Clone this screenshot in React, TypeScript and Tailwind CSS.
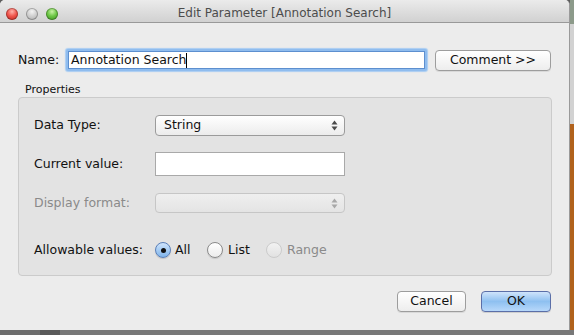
import React from "react";

const font = { fontFamily: '"DejaVu Sans", "Liberation Sans", sans-serif' };

function Light({ c1, c2, c3 }: { c1: string; c2: string; c3: string }) {
  return (
    <div
      className="w-[12px] h-[12px] rounded-full"
      style={{
        background: `radial-gradient(circle at 50% 30%, ${c1} 0%, ${c2} 45%, ${c3} 100%)`,
        boxShadow: "inset 0 0 0 1px rgba(0,0,0,0.25)",
      }}
    />
  );
}

function Stepper({ disabled }: { disabled?: boolean }) {
  const c = disabled ? "#a8a8a8" : "#4a4a4a";
  return (
    <svg width="7" height="11" viewBox="0 0 7 11">
      <path d="M3.5 0.5 L6.5 4.5 L0.5 4.5 Z" fill={c} />
      <path d="M3.5 10.5 L6.5 6.5 L0.5 6.5 Z" fill={c} />
    </svg>
  );
}

function Radio({ checked, disabled }: { checked?: boolean; disabled?: boolean }) {
  if (checked) {
    return (
      <div className="w-[16px] h-[16px] rounded-full border border-[#5a7fb8] bg-gradient-to-b from-[#cfe4fb] to-[#7fb4ea] flex items-center justify-center shadow-[0_1px_1px_rgba(0,0,0,0.15)]">
        <div className="w-[5px] h-[5px] rounded-full bg-[#111]" />
      </div>
    );
  }
  return (
    <div
      className={
        disabled
          ? "w-[16px] h-[16px] rounded-full border border-[#cbcbcb] bg-gradient-to-b from-[#f2f2f2] to-[#e2e2e2]"
          : "w-[16px] h-[16px] rounded-full border border-[#8a8a8a] bg-gradient-to-b from-[#ffffff] to-[#ececec] shadow-[0_1px_1px_rgba(0,0,0,0.12)]"
      }
    />
  );
}

export default function App() {
  return (
    <div className="w-[574px] h-[335px] bg-[#5d5d5d] flex flex-col overflow-hidden text-[12.5px]" style={font}>
      <div className="flex h-[330px]">
        <div className="w-[570px] h-[330px] bg-[#ececec] rounded-t-[5px] flex flex-col overflow-hidden border-r border-[#9a9a9a]">
          {/* Title bar */}
          <div className="h-[23px] shrink-0 bg-gradient-to-b from-[#ebebeb] to-[#d1d1d1] border-b border-[#999] flex items-start relative">
            <div className="flex gap-[8px] pl-[6px] pt-[8px] relative z-10">
              <Light c1="#ffb3ab" c2="#f0554c" c3="#b8231c" />
              <Light c1="#f4f4f4" c2="#d0d0d0" c3="#a9a9a9" />
              <Light c1="#c9f2a6" c2="#6cc745" c3="#3a8b20" />
            </div>
            <div className="absolute inset-0 flex items-center justify-center text-[12px] text-[#4c4c4c] pt-[3px]">
              Edit Parameter [Annotation Search]
            </div>
          </div>

          {/* Name row */}
          <div className="flex items-center mt-[26px] pl-[18px] h-[22px] shrink-0">
            <span className="text-[#111] w-[48px]">Name:</span>
            <div className="w-[361px] h-[22px] rounded-[2px] p-[2px] bg-[#8fbcee] shadow-[0_0_1px_1px_#a9cdf3]">
              <div className="w-full h-full bg-white border border-[#5d8fcf] flex items-center pl-[2px] text-[#111]">
                Annotation Search<span className="w-px h-[15px] bg-black" />
              </div>
            </div>
            <div className="ml-[8px] w-[116px] h-[21px] rounded-[4px] border border-[#9d9d9d] bg-gradient-to-b from-[#ffffff] to-[#ededed] flex items-center justify-center text-[#111] shadow-[0_1px_0_rgba(0,0,0,0.08)]">
              Comment &gt;&gt;
            </div>
          </div>

          {/* Properties */}
          <div className="pl-[25px] pt-[12px] text-[11px] text-[#111] leading-[13px]">Properties</div>
          <div className="mx-[18px] mt-[1px] h-[179px] w-[534px] shrink-0 rounded-[4px] border border-[#cbcbcb] bg-[#e3e3e3] flex flex-col pl-[15px]">
            <div className="flex items-center mt-[17px] h-[21px]">
              <span className="w-[121px] text-[#111]">Data Type:</span>
              <div className="w-[190px] h-[21px] rounded-[4px] border border-[#9b9b9b] bg-gradient-to-b from-[#ffffff] to-[#ececec] flex items-center justify-between pl-[8px] pr-[6px] text-[#111]">
                String
                <Stepper />
              </div>
            </div>
            <div className="flex items-center mt-[16px] h-[24px]">
              <span className="w-[121px] text-[#111]">Current value:</span>
              <div className="w-[190px] h-[24px] border border-[#a9a9a9] bg-white" />
            </div>
            <div className="flex items-center mt-[17px] h-[20px]">
              <span className="w-[121px] text-[#8a8a8a]">Display format:</span>
              <div className="w-[190px] h-[20px] rounded-[4px] border border-[#c6c6c6] bg-gradient-to-b from-[#efefef] to-[#e4e4e4] flex items-center justify-end pr-[6px]">
                <Stepper disabled />
              </div>
            </div>
            <div className="flex items-center mt-[28px] h-[18px]">
              <span className="w-[121px] text-[#111]">Allowable values:</span>
              <Radio checked />
              <span className="ml-[4px] w-[32px] text-[#111]">All</span>
              <Radio />
              <span className="ml-[5px] w-[38px] text-[#111]">List</span>
              <Radio disabled />
              <span className="ml-[5px] text-[#8a8a8a]">Range</span>
            </div>
          </div>

          {/* Buttons */}
          <div className="flex justify-end pr-[18px] mt-[15px] gap-[15px]">
            <div className="w-[69px] h-[21px] rounded-[4px] border border-[#9d9d9d] bg-gradient-to-b from-[#ffffff] to-[#ededed] flex items-center justify-center text-[#111] shadow-[0_1px_0_rgba(0,0,0,0.08)]">
              Cancel
            </div>
            <div className="w-[70px] h-[21px] rounded-[4px] border border-[#5b6fa8] bg-gradient-to-b from-[#cfe4fb] via-[#8ec0f0] to-[#b7d8fa] flex items-center justify-center text-[#111] shadow-[0_1px_0_rgba(0,0,0,0.12)]">
              OK
            </div>
          </div>
        </div>
        <div className="flex-1 flex flex-col">
          <div className="h-[24px] bg-[#8c9a8a]" />
          <div className="h-[100px] bg-[#d2d2d2]" />
          <div className="flex-1 bg-[#b1621c]" />
        </div>
      </div>
      <div className="flex-1 flex">
        <div className="w-[40px] bg-[#6e6e6e]" />
        <div className="w-[20px] bg-[#5a5a5a]" />
        <div className="flex-1 bg-[#787878]" />
      </div>
    </div>
  );
}
